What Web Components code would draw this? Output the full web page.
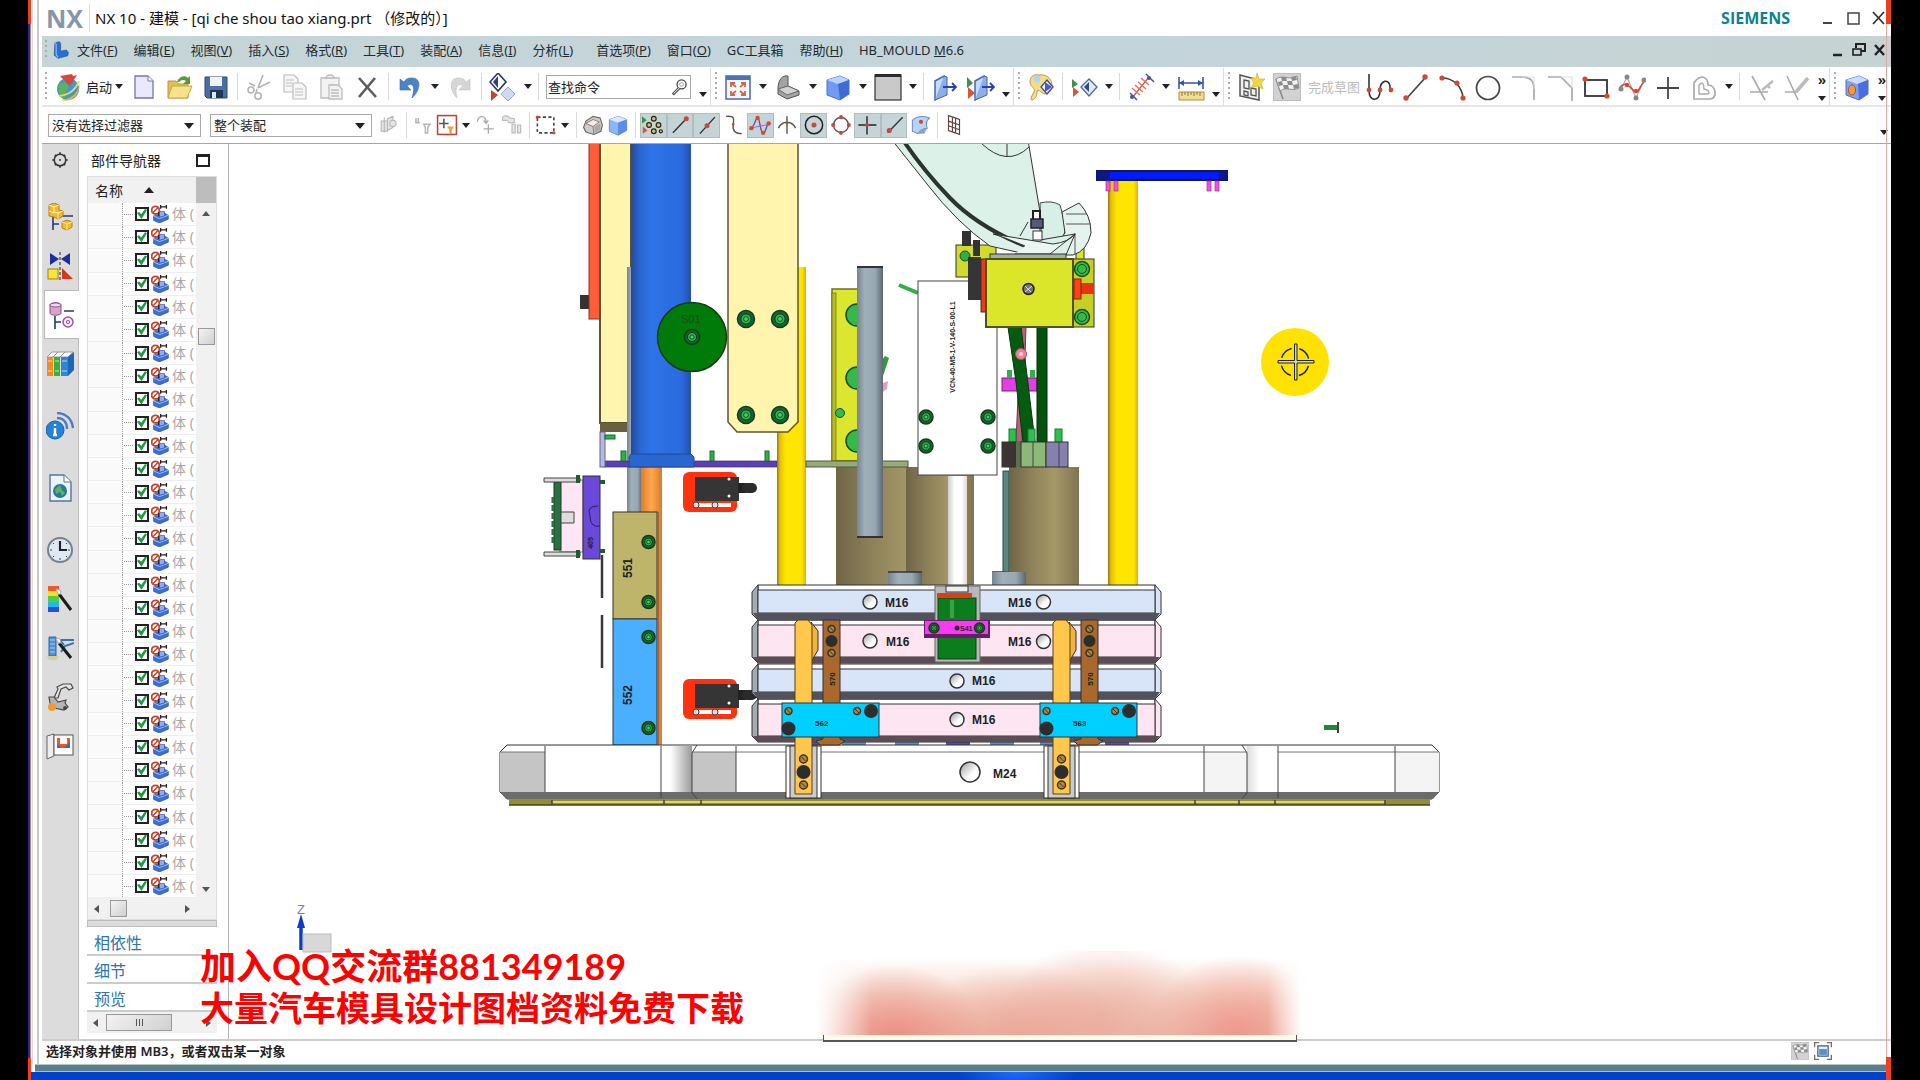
<!DOCTYPE html>
<html lang="zh-CN">
<head>
<meta charset="utf-8">
<title>NX 10 - 建模</title>
<style>
html,body{margin:0;height:100%;background:#000;overflow:hidden}
body{font-family:"Noto Sans","Noto Sans CJK SC",sans-serif;font-size:13px;color:#222}
</style>
</head>
<body>
<nx-app></nx-app>
<script>
const ICONS={
start:'<circle cx="14" cy="16" r="11" fill="#3c9ad0"/><path d="M5 12c4-4 8-2 9 1s-3 4-2 7-1 6-3 5-6-7-4-13z" fill="#5cb552"/><path d="M26 9c-1 10-8 17-19 18 8 3 19-3 19-18z" fill="#f2b31e"/><path d="M25 8c-3 8-10 14-20 15" stroke="#f6d45a" stroke-width="2" fill="none"/><path d="M6 3l12-2 1 2 4-1-7 11z" fill="#d8463c"/>',
new:'<path d="M5 3h13l5 5v17H5z" fill="#e9e9fb" stroke="#7476b0" stroke-width="1.3"/><path d="M18 3v5h5" fill="#fff" stroke="#7476b0"/>',
open:'<path d="M2 8h8l2 3h10v14H2z" fill="#e2c154" stroke="#b9963a"/><path d="M6 13h20l-5 12H2z" fill="#f7e28a" stroke="#c4a548"/><path d="M11 9c2-6 8-7 11-4l2-2v8h-7l3-3c-3-2-5-1-7 1z" fill="#5b9a3b"/>',
save:'<path d="M3 4h22v21H5l-2-2z" fill="#4b6f9f" stroke="#2e4b73"/><path d="M8 4h12v9H8z" fill="#eef2f8"/><path d="M8 17h13v8H8z" fill="#20355a"/><path d="M10 19h4v6h-4z" fill="#dfe7f2"/>',
cut:'<g fill="none" stroke="#b4b4b4" stroke-width="1.6"><path d="M13 15L18 2M13 15l12-6M10 13l-6-3M12 16l-1 4"/><circle cx="6" cy="17" r="3"/><circle cx="13" cy="23" r="3.2"/></g>',
copy:'<g fill="#f6f6f6" stroke="#bdbdbd" stroke-width="1.2"><path d="M3 2h10l4 4v13H3z"/><path d="M12 10h9l4 4v12H12z"/><path d="M5 7h8M5 10h6M5 13h6M14 16h8M14 19h8M14 22h8"/></g>',
paste:'<g fill="#f3f3f3" stroke="#bdbdbd" stroke-width="1.3"><path d="M4 5h18v20H4z"/><path d="M9 5c0-4 8-4 8 0z"/><path d="M12 12h9l4 4v10H12z"/><path d="M14 17h8M14 20h8M14 23h8"/></g>',
del:'<path d="M6 5l17 19M22 5L6 24" stroke="#5c5c5c" stroke-width="2.6"/>',
undo:'<path d="M4 6v11h11l-4-4c5-4 9 0 5 12 9-8 10-21-1-20-4 0-6 2-7 4z" fill="#4b83c4" stroke="#3b70b0" stroke-width=".6"/>',
redo:'<path d="M24 6v11H13l4-4c-4-4-9 0-6 12-8-8-8-21 2-20 4 0 6 2 7 4z" fill="#d6d6d6" stroke="#c0c0c0" stroke-width=".6"/>',
feat:'<path d="M9 0l8 9-8 9-8-9z" fill="#fff" stroke="#28336e" stroke-width="1.6"/><path d="M9 3v12L4 9z" fill="#28407e"/><path d="M2 17v11l7-6z" fill="#c2452e"/><path d="M19 14l7 7-7 7-7-7z" fill="#cfd9f0" stroke="#9aacd4"/>',
fit:'<rect x="2" y="3" width="24" height="23" fill="#f3f8ff" stroke="#4f72b2" stroke-width="1.6"/><path d="M2 3h24v4H2z" fill="#4f72b2"/><g stroke="#d9653e" stroke-width="1.8" fill="none"><path d="M12 14L7 10m0 4v-4h4M16 14l5-4m-4 0h4v4M12 18l-5 4m0-4v4h4M16 18l5 4m-4 0h4v-4"/></g>',
seat:'<path d="M4 16C4 6 9 2 14 3v10l11 5v4l-12 4-9-5z" fill="#a3a3a3" stroke="#555"/><path d="M4 16l10-3 11 5-12 4z" fill="#d1d1d1" stroke="#666"/>',
cube:'<path d="M3 7l13-4 9 4v14l-9 6-13-5z" fill="#6f9cf0" stroke="#4c6fc8"/><path d="M3 7l13-4 9 4-11 4z" fill="#b9d2ff"/><path d="M14 11l11-4v14l-9 6z" fill="#3f6cd0"/>',
box:'<rect x="1" y="2" width="26" height="25" fill="#c9c9c9" stroke="#333" stroke-width="1.2"/><path d="M1 1h26v3H1z" fill="#2c2830"/>',
wall:'<path d="M4 8l9-5v18l-9 6z" fill="#c6dafd" stroke="#4866a8" stroke-width="1.5"/><path d="M13 3l3 1v18l-12 5" fill="#8daee8" stroke="#4866a8"/><path d="M12 14h13m-4-4l4 4-4 4" stroke="#2b3fb0" stroke-width="1.8" fill="none"/>',
wall2:'<path d="M0 4v11l6-5z" fill="#3c9347"/><path d="M1 14v12l7-6z" fill="#d9553a"/><path d="M8 8l9-5v18l-9 6z" fill="#c6dafd" stroke="#4866a8" stroke-width="1.5"/><path d="M17 3l3 1v18l-12 5" fill="#8daee8" stroke="#4866a8"/><path d="M15 14h12m-4-4l4 4-4 4" stroke="#2b3fb0" stroke-width="1.8" fill="none"/>',
palette:'<path d="M3 9c0-7 6-8 9-7 7-1 12 3 13 9 1 5-3 10-7 10-5-1-5-5-8-3 0 4-1 8-5 9-2 0-1-3 2-8 2-4-4-5-4-10z" fill="#f6dc86" stroke="#b89c4b"/><circle cx="10" cy="6" r="3.4" fill="#a9d6f4"/><path d="M14 14l6-7 6 7-6 7z" fill="#eef" stroke="#3a4da0" stroke-width="1.3"/><path d="M18 9v10l7-5z" fill="#4a5fb4"/>',
play:'<path d="M2 6v9l6-4z" fill="#3c9347"/><path d="M3 14v10l6-5z" fill="#d9553a"/><path d="M19 6l8 8-8 9-8-9z" fill="#e2ebfb" stroke="#566aa8" stroke-width="1.4"/><path d="M19 9v10l-5-5z" fill="#2d4a94"/>',
dim:'<path d="M5 25L22 4" stroke="#c9553e" stroke-width="1.2"/><path d="M5 15l8 7M8 12l8 7M11 9l8 7M14 5l8 7" stroke="#d9765f" stroke-width="1.4"/><path d="M3 20l7 7M19 1l8 8" stroke="#4453a8" stroke-width="1.5"/><circle cx="5" cy="24" r="2" fill="#4453a8"/><circle cx="22" cy="5" r="2" fill="#4453a8"/>',
ruler:'<path d="M2 10h24M2 4v12M26 4v12" stroke="#3355a8" stroke-width="1.6"/><path d="M2 10l5-3v6zM26 10l-5-3v6z" fill="#3355a8"/><path d="M2 19h25v8H2z" fill="#f3dd94" stroke="#a38f47"/><path d="M5 19v4M8 19v3M11 19v4M14 19v3M17 19v4M20 19v3M23 19v4" stroke="#8a783a"/>',
sketch:'<path d="M3 2l19 5v20L3 23z" fill="#f1f1f1" stroke="#555" stroke-width="1.5"/><path d="M7 7l5 1v8l-5-1zM14 15l5 1v7l-5-1zM7 18l4 1v4l-4-1z" fill="none" stroke="#555" stroke-width="1.3"/><path d="M20 0l2 6 6 0-4 4 2 6-6-3-6 2 3-5-3-5h5z" fill="#f1d843" stroke="#c9a821" stroke-width=".6"/>',
flag:'<rect x="0.500" y="0.500" width="27" height="27" fill="#d2d2d2" stroke="#bdbdbd"/><path d="M3 6l7 20" stroke="#8a8a8a" stroke-width="1.600"/><path d="M3 6c7-5 13 2 21-3l2 12c-7 4-13-2-19 3z" fill="#f2f2f2" stroke="#8f8f8f"/><path d="M8 4l5 0 1 4-5 0zM18 4l5-1 1 4-5 1zM5 9l4-1 1 4-4 1zM14 8l5 0 1 4-5 0zM10 12l5 0 1 4-5 0zM20 12l5-1 1 4-5 1z" fill="#8c8c8c"/>',
profile:'<path d="M3 1v17c0 11 11 11 11 0 0-12 9-12 10-5v6" fill="none" stroke="#333" stroke-width="1.6"/><g fill="#d04a38"><circle cx="3" cy="17" r="2.4"/><circle cx="14" cy="17" r="2.4"/><circle cx="25" cy="17" r="2.4"/></g>',
line:'<path d="M5 25L23 5" stroke="#444" stroke-width="1.7"/><circle cx="4" cy="25" r="2.7" fill="#d04a38"/><circle cx="23" cy="4" r="2.7" fill="#d04a38"/>',
arc:'<path d="M4 5c11 0 20 8 21 20" fill="none" stroke="#444" stroke-width="1.7"/><g fill="#d04a38"><circle cx="4" cy="5" r="2.6"/><circle cx="19" cy="10" r="2.6"/><circle cx="25" cy="25" r="2.6"/></g>',
circle:'<circle cx="14" cy="15" r="11.5" fill="none" stroke="#444" stroke-width="1.7"/>',
fillet:'<path d="M2 4h10c9 0 12 4 12 13v10" fill="none" stroke="#aaa" stroke-width="1.7"/><path d="M12 4h12v12" fill="none" stroke="#ddd"/>',
chamfer:'<path d="M2 4h13l11 11v13" fill="none" stroke="#aaa" stroke-width="1.7"/><path d="M15 4h11v11" fill="none" stroke="#ddd"/>',
rect:'<rect x="3" y="7" width="22" height="16" fill="none" stroke="#333" stroke-width="1.8"/><circle cx="3" cy="6" r="2.6" fill="#d04a38"/><circle cx="25" cy="23" r="2.6" fill="#d04a38"/>',
spline:'<path d="M3 16l6-12 9 21 8-18" fill="none" stroke="#aaa" stroke-width="1.200"/><path d="M2 14c5-5 8-2 10 0s6 7 8 4 3-6 6-9" fill="none" stroke="#d04a38" stroke-width="1.6"/><g fill="#888"><circle cx="3" cy="16" r="2.5"/><circle cx="9" cy="4" r="2.5"/><circle cx="18" cy="25" r="2.5"/><circle cx="26" cy="7" r="2.5"/></g><circle cx="9" cy="12" r="2.200" fill="#d04a38"/><circle cx="18" cy="18" r="2.200" fill="#d04a38"/>',
plus:'<path d="M14 4v22M3 15h22" stroke="#444" stroke-width="1.8"/>',
offset:'<path d="M4 26V10c6-9 14-7 14 2 8 0 10 14 2 14z" fill="none" stroke="#aaa" stroke-width="1.7"/><path d="M9 21v-9c4-4 5-1 5 4 6 1 6 5 3 5z" fill="none" stroke="#aaa" stroke-width="1.4"/>',
trim:'<path d="M5 3l13 24M3 19l18 0" stroke="#aaa" stroke-width="1.6"/><path d="M15 17L26 8M20 12l3 3" stroke="#bbb" stroke-width="2.5"/>',
extend:'<path d="M4 3l11 24M2 19l12 0" stroke="#aaa" stroke-width="1.6"/><path d="M13 19L25 5" stroke="#bbb" stroke-width="3.5"/>',
hole:'<path d="M3 7l13-4 9 4v14l-9 6-13-5z" fill="#7fa0f0" stroke="#4c6fc8"/><path d="M3 7l13-4 9 4-11 4z" fill="#cadcff"/><path d="M15 11l10-4v14l-9 6z" fill="#4a6ee0"/><ellipse cx="9" cy="17" rx="3.6" ry="5" fill="#f39a3a" stroke="#b9501c"/>',
gray1:'<g fill="#e3e3e3" stroke="#b5b5b5" stroke-width="1.3"><path d="M4 9h8v13H4zM12 6l7-3v14l-7 4z"/><circle cx="19" cy="12" r="4"/><path d="M8 4v20"/></g>',
gray2:'<path d="M5 5v6h5M8 5v5M15 13h8l-3 4v7h-3v-7z" fill="none" stroke="#b8b8b8" stroke-width="2"/>',
redbox:'<rect x="2" y="2" width="24" height="24" fill="#fff" stroke="#b6483c" stroke-width="2"/><path d="M10 6v12M4 12h12" stroke="#555" stroke-width="2"/><path d="M14 16h9l-3 4v5h-3v-5z" fill="#efa233"/>',
gray3:'<g fill="none" stroke="#aaa" stroke-width="1.7"><path d="M3 10c0-9 12-9 11 1M11 8l3 4 3-4M17 13v12M11 19h13"/></g>',
gray4:'<g fill="#e8e8e8" stroke="#bbb" stroke-width="1.5"><path d="M2 4c4-3 8-1 9 1l6 1v5h-7l-2-3-6 0z"/><path d="M14 13h4v11h-4zM21 14h4v10h-4z"/></g>',
marq:'<rect x="3" y="4" width="21" height="20" fill="none" stroke="#444" stroke-width="2" stroke-dasharray="4 3"/><circle cx="3" cy="4" r="2" fill="#c54a3c"/><circle cx="24" cy="24" r="2" fill="#c54a3c"/>',
stone:'<path d="M2 17l3-8 9-6 9 2 3 9-2 8-9 4-10-3z" fill="#ccc" stroke="#666" stroke-width="1.4"/><path d="M5 12l9-5 8 3-8 6zM14 16l1 9" fill="#eee" stroke="#9b5d55"/><path d="M16 16l7-4 1 8-8 4z" fill="#aaa"/>',
cube2:'<path d="M3 7l12-4 10 4v14l-11 6-11-5z" fill="#8ab6f4" stroke="#5580c8"/><path d="M3 7l12-4 10 4-11 4z" fill="#d9e8ff"/><path d="M14 11l11-4v14l-11 6z" fill="#5b8de4"/>',
snap:'<path d="M0 3v9l6-4z" fill="#3c9347"/><path d="M1 16v9l6-4z" fill="#d9553a"/><g fill="#e3c24a" stroke="#222" stroke-width="1.5"><circle cx="15" cy="6" r="3"/><circle cx="9" cy="14" r="3"/><circle cx="21" cy="14" r="3"/><circle cx="15" cy="22" r="3"/><circle cx="24" cy="22" r="2"/></g>',
end:'<path d="M5 24L22 6" stroke="#333" stroke-width="1.8"/><circle cx="22" cy="6" r="3.2" fill="#c7483c"/>',
mid:'<path d="M5 25L24 4" stroke="#333" stroke-width="1.8"/><circle cx="14" cy="15" r="3.2" fill="#c7483c"/>',
curve:'<path d="M4 3c11-1 10 3 9 10s1 12 11 12" fill="none" stroke="#555" stroke-width="1.8"/><circle cx="13" cy="13" r="1.6" fill="#c7483c"/>',
spl2:'<path d="M3 17c4 0 5-12 8-12s3 19 7 19 4-11 7-12" fill="none" stroke="#7a3f96" stroke-width="1.7"/><path d="M2 18l24-5" stroke="#9a6ab0" stroke-width="1.200"/><g fill="#d04a38"><circle cx="3" cy="18" r="2.8"/><circle cx="11" cy="5" r="2.8"/><circle cx="18" cy="24" r="2.8"/><circle cx="25" cy="12" r="2.8"/></g>',
cross:'<path d="M14 3v22M3 18c5-10 17-10 22 0" fill="none" stroke="#555" stroke-width="1.8"/><circle cx="14" cy="12" r="1.6" fill="#c7483c"/>',
cen:'<circle cx="14" cy="14" r="11" fill="none" stroke="#222" stroke-width="1.9"/><circle cx="14" cy="14" r="3.2" fill="#c7483c"/>',
quad:'<circle cx="14" cy="14" r="9.5" fill="none" stroke="#555" stroke-width="1.8"/><g fill="#c7483c"><circle cx="14" cy="4" r="2.6"/><circle cx="14" cy="24" r="2.6"/><circle cx="4" cy="14" r="2.6"/><circle cx="24" cy="14" r="2.6"/></g>',
pt:'<path d="M14 3v23M3 14h23" stroke="#222" stroke-width="1.8"/><circle cx="14" cy="14" r="2.6" fill="#c7483c"/>',
on:'<path d="M6 24L25 4" stroke="#333" stroke-width="1.8"/><circle cx="8" cy="21" r="3.2" fill="#c7483c"/>',
face:'<path d="M3 8c6-6 13-6 22-3-4 3-5 8-3 13-5 0-9 2-12 7L3 22z" fill="#b8d3f6" stroke="#6c8cc4" stroke-width="1.300"/><path d="M10 25c3-5 7-7 12-7l-4 7z" fill="#7ea4de"/><circle cx="14" cy="10" r="2.6" fill="#c7483c"/>',
mesh:'<path d="M7 2l14 5v19L7 21zM12 4v19M16 5v19M7 9l14 5M7 15l14 5" fill="none" stroke="#5c4444" stroke-width="1.5"/>',
gear:'<circle cx="14" cy="14" r="9" fill="none" stroke="#333" stroke-width="2.4"/><path d="M14 2v4M14 22v4M2 14h4M22 14h4M6 6l2 2M20 20l2 2M22 6l-2 2M8 20l-2 2" stroke="#333" stroke-width="2.4"/><circle cx="14" cy="14" r="1.5" fill="#333"/>',
asm:'<path d="M7 14v13M7 21h6M14 13h13" stroke="#223a78" stroke-width="1.6"/><path d="M3 2l5-2 5 2v5l4 1v5l-5 3-4-2-5-1z" fill="#f2b92e" stroke="#bd7f12"/><path d="M3 2l5 2 5-2M8 4v5M8 9l4 1 5-2M12 10v6M3 8l5 2" stroke="#fff3b0" fill="none"/><path d="M16 19l5-2 5 2v5l-5 3-5-2z" fill="#f2b92e" stroke="#bd7f12"/><path d="M16 19l5 2 5-2M21 21v6" stroke="#fff3b0" fill="none"/>',
cons:'<path d="M4 1v12l9-6zM24 1v12l-9-6z" fill="#1d2ea0"/><path d="M14 0v28" stroke="#222" stroke-dasharray="3 2"/><rect x="2" y="17" width="10" height="10" fill="#fbe53b" stroke="#a0820a"/><path d="M16 16v11h11z" fill="#d5371d"/>',
part:'<path d="M2 4c0-3 11-3 11 0v8c0 3-11 3-11 0z" fill="#d6a3cf" stroke="#8d4f86"/><ellipse cx="7.500" cy="4" rx="5.500" ry="2" fill="#f3d5ef" stroke="#8d4f86"/><path d="M16 10h10M7 15v13M7 21h6" stroke="#223a78" stroke-width="1.6"/><circle cx="20" cy="21" r="5" fill="#f5e5f5" stroke="#9a5a9a" stroke-width="1.5"/><circle cx="20" cy="21" r="1.6" fill="none" stroke="#9a5a9a"/>',
books:'<path d="M1 7l5-5h21l-5 5z" fill="#fff" stroke="#999"/><path d="M1 7h6v19H1z" fill="#f28b22"/><path d="M8 7h6v19H8z" fill="#3cae3b"/><path d="M15 7h7v19h-7z" fill="#2a86d8"/><path d="M22 7l6-5v18l-6 6z" fill="#1c66b4"/><path d="M2 11h4M9 11h4M16 11h5M2 21h4M9 21h4M16 21h5" stroke="#fff" stroke-opacity=".7"/><path d="M7 7l5-5M14 7l5-5" stroke="#888"/>',
info:'<circle cx="9" cy="18" r="9" fill="#2383d8" stroke="#1560a8"/><path d="M9 12v2M9 16v7M7 23h4" stroke="#fff" stroke-width="2.4"/><path d="M11 6c6 0 10 4 10 11M11 1c9 0 15 6 16 15" fill="none" stroke="#4d7cc4" stroke-width="2.4"/>',
doc:'<path d="M4 1h14l7 7v19H4z" fill="#eaf4fc" stroke="#55749b" stroke-width="1.4"/><path d="M18 1v7h7" fill="#fff" stroke="#55749b"/><circle cx="14" cy="17" r="7" fill="#2a77a5"/><path d="M9 15l5-4 2 5 3 3-3 3-2-4-4 2z" fill="#59b35b"/>',
clock:'<circle cx="14" cy="14" r="12" fill="#dfe9f5" stroke="#76828f" stroke-width="2"/><path d="M14 5v9h7" fill="none" stroke="#222" stroke-width="2.2"/><path d="M14 22v2M4 14h2M22 14h2M7 7l1 1M21 7l-1 1M7 21l1-1M21 21l-1-1" stroke="#445"/>',
rain:'<path d="M2 1h11v5H2z" fill="#f0582a"/><path d="M2 6h11v5H2z" fill="#f8dd2c"/><path d="M2 11h11v6H2z" fill="#4fcf3d"/><path d="M2 17h11v5H2z" fill="#28b8e8"/><path d="M2 22h11v5H2z" fill="#2a50d8"/><path d="M13 9l12 16" stroke="#1b1b1b" stroke-width="3"/><path d="M10 4l4 1 1 4-3 0z" fill="#fff" stroke="#aaa"/>',
tool:'<path d="M3 3h7v19H3z" fill="#4e91d8" stroke="#2d66a8"/><path d="M4 6h5M4 10h5M4 14h5M4 18h5" stroke="#a8d0f6"/><path d="M1 22h12l-2 4H3z" fill="#d9ce90"/><path d="M28 6H14l4 5M28 9l-9 3-4 6" fill="none" stroke="#3476b8" stroke-width="2"/><path d="M13 9l12 15" stroke="#1b1b1b" stroke-width="3"/><path d="M10 4l4 1 1 4-3 0z" fill="#fff" stroke="#aaa"/>',
fork:'<path d="M11 4l6-3 8 0 2 4-4 2-3-3-5 2-3 9-4 0 4-9z" fill="#e4e4e4" stroke="#4a4a4a" stroke-width="1.200"/><path d="M3 14l5 0 4 5 8-2-1 3 3 4-4 3-10-2-4-5z" fill="#b5b5b5" stroke="#4a4a4a" stroke-width="1.200"/><circle cx="6" cy="24" r="4" fill="#ef9d32"/><circle cx="19" cy="25" r="2" fill="#444"/>',
pic:'<path d="M1 4l7-2v22l-7 3z" fill="#eee" stroke="#666"/><rect x="8" y="3" width="19" height="20" fill="#fff" stroke="#555"/><rect x="11" y="6" width="13" height="10" fill="#e55a2b"/><path d="M14 6h7v6h-7z" fill="#fff"/><path d="M11 12l5 4h-5zM18 16l6-6v6z" fill="#2e6cd0"/>',
body:'<path d="M4 17l16-5 7 4v6l-14 6-9-4z" fill="#3b6ed8" stroke="#2a4fa8"/><path d="M4 17l9 4 14-5" fill="none" stroke="#b8d0ff" stroke-width="1.300"/><path d="M12 10h9v7l-8 2z" fill="#8ab0f0" stroke="#2a4fa8"/><circle cx="7" cy="8" r="6" fill="#fff" stroke="#c8432b" stroke-width="2.8"/><path d="M3 12l8-8" stroke="#c8432b" stroke-width="2.400"/><path d="M15 3h9M15 0v6M24 0v6M12 11v6" stroke="#222" stroke-width="2"/>',
nx:'<path d="M6 3l7-2 2 3v12l9-2 3 4-1 5-15 4-6-5z" fill="#2c6fd4" stroke="#1a4ca0"/><path d="M6 3l2 2v16l3 4" fill="none" stroke="#9cc4ff" stroke-width="1.6"/>',
lens:'<circle cx="18" cy="10" r="7" fill="none" stroke="#444" stroke-width="2"/><circle cx="18" cy="10" r="3" fill="none" stroke="#777"/><path d="M13 15l-9 9 2 2 9-9" fill="#fff" stroke="#444" stroke-width="1.6"/>',
win:'<path d="M1 8V1h7M20 1h7v7M27 20v7h-7M8 27H1v-7" fill="none" stroke="#7b6a6a" stroke-width="2"/><rect x="6" y="6" width="16" height="16" fill="#e6eef8" stroke="#45618a" stroke-width="2"/><path d="M8 11h12v9H8z" fill="#5b8dcb"/>'
};
const define=(name,tpl,init)=>{
 const t=document.createElement('template');t.innerHTML=tpl;
 customElements.define(name,class extends HTMLElement{
  constructor(){super();this.attachShadow({mode:'open'}).append(t.content.cloneNode(true))}
  connectedCallback(){if(!this.ready){this.ready=true;if(init)init(this,this.shadowRoot)}}
 });
};

define('nx-icon','<style>:host{display:block;width:28px;height:28px;flex:none}:host([small]){width:22px;height:22px}:host([tiny]){width:18px;height:18px}svg{display:block;width:100%;height:100%}</style><svg viewBox="0 0 28 28" aria-hidden="true"></svg>',
 (h,r)=>{r.querySelector('svg').innerHTML=ICONS[h.getAttribute('name')]||''});

define('nx-button',`<style>:host{display:block;width:36px;flex:none}:host([compact]){width:26px}:host([narrow]){width:24px}:host([grow]){width:auto;flex:1 1 0}
button{font:inherit;border:1px solid transparent;background:none;padding:0;margin:0;width:100%;height:32px;display:flex;align-items:center;justify-content:center}
:host([compact]) button,:host([narrow]) button,:host([grow]) button{height:25px}
:host([on]) button{background:#c5d4d6;border-color:#aebfc2}</style><button type="button"><slot></slot></button>`,
 (h,r)=>r.querySelector('button').setAttribute('aria-label',h.getAttribute('label')||'tool'));

define('nx-arrow',`<style>:host{display:block;width:14px;flex:none;align-self:center}:host([low]){align-self:flex-end;padding-bottom:6px;box-sizing:border-box}
button{border:0;background:none;padding:0;width:100%;height:10px;display:grid;place-items:center}i{border:4px solid transparent;border-top:5px solid #222;border-bottom:0}
span{display:none;font:bold 15px/15px "Liberation Sans";color:#222}:host([more]) span{display:block}:host([more]) button{height:29px;align-content:space-between}</style><button type="button" aria-label="更多"><span>»</span><i></i></button>`);
define('nx-sep','<style>:host{display:block;width:7px;flex:none;align-self:stretch;padding:5px 3px;box-sizing:border-box}:host([wide]){width:9px;padding:5px 4px}i{display:block;height:100%;border-left:1px solid #d9d9d9}</style><i></i>');
define('nx-grip','<style>:host{display:block;width:10px;flex:none;align-self:stretch;padding:4px 2px 4px 4px;box-sizing:border-box;border-left:1px solid #ddd}:host([first]){width:8px;border:0;padding-left:3px}i{display:block;height:100%;width:2px;background:repeating-linear-gradient(#aaa 0 2px,transparent 2px 5px)}</style><i></i>');

define('nx-titlebar',`<style>:host{display:flex;align-items:center;height:36px;padding-left:4px;color:#111}
b.l{font:bold 25px/36px "Open Sans",sans-serif;color:#8497a6;width:43px}
.t{border-left:1px solid #ddd;padding-left:5px;font-size:15px;line-height:28px;flex:1;white-space:pre}
b.s{font:bold 16px/36px "Open Sans",sans-serif;color:#0b8291;margin-right:32px}
button{border:0;background:none;padding:0;width:13px;height:14px;margin-right:12px}button:last-child{margin-right:6px}svg{display:block}</style>
<b class="l">NX</b><span class="t">NX 10 - 建模 - [qi che shou tao xiang.prt （修改的）]</span><b class="s">SIEMENS</b>
<button aria-label="最小化"><svg width="13" height="14"><path d="M1 12h9" stroke="#444" stroke-width="2"/></svg></button>
<button aria-label="最大化"><svg width="13" height="14"><rect x="1" y="2" width="11" height="11" fill="none" stroke="#444" stroke-width="1.500"/></svg></button>
<button aria-label="关闭"><svg width="13" height="14"><path d="M1 1l11 12M12 1L1 13" stroke="#333" stroke-width="1.800"/></svg></button>`);

define('nx-menubar',`<style>:host{display:flex;align-items:center;height:31px;padding-bottom:3px;box-sizing:border-box;background:linear-gradient(90deg,#c6d5d5,#c3d4dc 50%,#c6d3d3);color:#1e2c30}
nx-icon{margin:0 8px 0 1px}
nav{display:flex;flex:1;gap:16px}button{font:inherit;font-size:13px;line-height:20px;color:inherit;border:0;background:none;padding:0;white-space:nowrap}
.w{display:flex;gap:7px;padding-right:5px}.w svg{display:block}.pad{padding-left:7px}</style>
<nx-grip first></nx-grip><nx-icon name="nx" tiny></nx-icon>
<nav><button>文件(<u>F</u>)</button><button>编辑(<u>E</u>)</button><button>视图(<u>V</u>)</button><button>插入(<u>S</u>)</button><button>格式(<u>R</u>)</button><button>工具(<u>T</u>)</button><button>装配(<u>A</u>)</button><button>信息(<u>I</u>)</button><button>分析(<u>L</u>)</button><button class="pad">首选项(<u>P</u>)</button><button>窗口(<u>O</u>)</button><button>GC工具箱</button><button>帮助(<u>H</u>)</button><button>HB_MOULD <u>M</u>6.6</button></nav>
<div class="w"><button aria-label="最小化"><svg width="13" height="14"><path d="M1 12h9" stroke="#222" stroke-width="2.500"/></svg></button><button aria-label="还原"><svg width="14" height="14"><path d="M4 5V1h9v7H9" fill="none" stroke="#222" stroke-width="2"/><rect x="1" y="6" width="8" height="6" fill="none" stroke="#222" stroke-width="1.600"/></svg></button><button aria-label="关闭"><svg width="13" height="14"><path d="M2 2l9 10M11 2L2 12" stroke="#222" stroke-width="2.400"/></svg></button></div>`);

const bt=(n,a='')=>`<nx-button ${a} label="${n}"><nx-icon name="${n}" ${/compact|narrow|grow/.test(a)?'small':''}></nx-icon></nx-button>`;
const A='<nx-arrow></nx-arrow>',L='<nx-arrow low></nx-arrow>',S='<nx-sep></nx-sep>',W='<nx-sep wide></nx-sep>',G='<nx-grip></nx-grip>';
const seq=s=>s.split(' ').map(k=>({A,L,S,G})[k]||bt(k)).join('');
define('nx-main-toolbar',`<style>:host{display:flex;align-items:center;height:40px;padding-top:1px;border-bottom:2px solid #e6e6e6;box-sizing:border-box}
.lb{font-size:13px;width:26px;white-space:nowrap}.off{color:#bcbcbc;font-size:13px;width:54px;padding-left:3px}
label{display:flex;align-items:center;box-sizing:border-box;width:145px;height:24px;border:1px solid #aaa;margin:0 5px 0 4px;padding:0 2px 0 1px}
input{font:inherit;font-size:13px;border:0;outline:0;padding:0;min-width:0;flex:1;color:#222;background:none}input::placeholder{color:#222;opacity:1}</style>
<nx-grip first></nx-grip>${bt('start')}<span class="lb">启动</span>${A}${seq('new open save S cut copy paste del S undo A redo S feat A S')}
<label><input type="text" placeholder="查找命令" aria-label="查找命令"><nx-icon name="lens" tiny></nx-icon></label>${L}
${seq('G fit A seat A cube A box A S wall wall2 L G palette S play A S dim A ruler L G sketch flag')}<span class="lb off">完成草图</span>
${seq('profile line arc circle fillet chamfer rect spline plus offset A S trim extend')}<nx-arrow more></nx-arrow>${G}${bt('hole')}<nx-arrow more></nx-arrow>`);

define('nx-combo',`<style>:host{display:block;position:relative;flex:none;box-sizing:border-box;height:23px;border:1px solid #aaa;background:#fff}
select{appearance:none;border:0;background:none;font:inherit;font-size:13px;width:100%;height:100%;padding:0 20px 0 3px;color:#222;outline:0}
i{position:absolute;right:6px;top:8px;border:5px solid transparent;border-top:6px solid #222;border-bottom:0;pointer-events:none}</style><select></select><i></i>`,
 (h,r)=>{const s=r.querySelector('select');s.setAttribute('aria-label',h.getAttribute('value'));s.add(new Option(h.getAttribute('value')))});
define('nx-select-toolbar',`<style>:host{display:flex;align-items:center;height:37px;border-bottom:1px solid #a6a6a6;box-sizing:border-box;padding-left:6px}
.a{width:153px;margin-right:9px}.b{width:162px;margin-right:4px}.g{display:flex;width:294px}.f{flex:1}</style>
<nx-combo class="a" value="没有选择过滤器"></nx-combo><nx-combo class="b" value="整个装配"></nx-combo>
${bt('gray1','compact')}${W}${bt('gray2','narrow')}${bt('redbox','narrow')}${A}${bt('gray3','compact')}${bt('gray4','compact')}${W}${bt('marq','narrow')}${A}${W}${bt('stone','narrow')}${bt('cube2','compact')}${W}
<div class="g">${['snap*','end*','mid*','curve','spl2*','cross','cen*','quad','pt*','on*','face'].map(x=>bt(x.replace('*',''),'grow '+(x.includes('*')?'on':''))).join('')}</div><nx-sep></nx-sep>${bt('mesh','compact')}<span class="f"></span>${L}`);

define('nx-resource-bar',`<style>:host{display:flex;flex-direction:column;width:37px;flex:none;background:#dcdcdc;border-right:1px solid #bbb;box-sizing:border-box}
button{border:0;border-right:0;background:none;padding:0;height:49px;flex:none;display:grid;place-items:center}
.g{height:31px;margin-bottom:17px}.m{margin-top:13px}.on{background:#fff;margin:0 -1px 0 2px;border:1px solid #bbb;border-right:0}</style>
${['gear','asm','cons','part','books','info','doc','clock','rain','tool','fork','pic'].map(n=>`<button aria-label="${n}" class="${n=='gear'?'g':n=='part'?'on':/info|doc|clock/.test(n)?'m':''}"><nx-icon name="${n}" ${n=='gear'?'tiny':''}></nx-icon></button>`).join('')}`);

define('tree-row',`<style>:host{display:flex;align-items:center;flex:1 1 0;min-height:0;border-bottom:1px solid #eee;box-sizing:border-box;overflow:hidden;color:#aaa}
.in{width:34px;flex:none;align-self:stretch;border-right:1px dotted #999;background:#fafafa}.d{width:9px;flex:none;border-top:1px dotted #999;margin:0 2px 0 1px}
label{display:flex;align-items:center;white-space:pre;font-size:14px;line-height:20px}
input{appearance:none;width:14px;height:14px;border:2px solid #222;background:#fff;margin:0 2px 0 0;display:grid;flex:none}
input::before{content:"";background:#1b9a42;clip-path:polygon(0 40%,22% 30%,42% 52%,80% 0,100% 8%,45% 100%)}
nx-icon{margin-right:3px}</style><span class="in"></span><span class="d"></span><label><input type="checkbox" checked><nx-icon name="body" tiny></nx-icon><slot></slot></label>`);

define('part-navigator',`<style>:host{display:flex;flex-direction:column;width:150px;flex:none;border-right:1px solid #b5b5b5;box-sizing:border-box;padding:0 11px 0 8px}
header{display:flex;align-items:center;justify-content:space-between;height:32px;padding:0 7px 0 4px;font-size:14px}header button{width:14px;height:13px;padding:0;border:2px solid #222;border-top-width:3px;background:#fff}
.box{border:1px solid #ddd;display:flex;flex-direction:column;flex:1;min-height:0}
.h{display:flex;height:26px;flex:none;background:#f1f1f1;align-items:center;padding-left:7px;font-size:14px}.h i{border:5px solid transparent;border-bottom:6px solid #222;border-top:0;margin-left:21px;flex:none}.h b{margin-left:auto;width:20px;align-self:stretch;background:#bdbdbd}
.b{display:flex;flex:1;min-height:0}.rows{flex:1;min-width:0;display:flex;flex-direction:column}
.v{width:20px;flex:none;background:#f1f1f1;display:flex;flex-direction:column;align-items:center;padding:8px 0 6px;box-sizing:border-box}
.v i,.hs i{border:4px solid transparent}.v .u{border-bottom:5px solid #555;border-top:0}.v .dn{border-top:5px solid #555;border-bottom:0;margin-top:auto}
.th{background:linear-gradient(135deg,#f3f3f3,#d0d0d0);border:1px solid #999;box-sizing:border-box}
.v .th{width:17px;height:17px;margin-top:112px}
.hs{display:flex;align-items:center;height:21px;flex:none;background:#f1f1f1;padding:0 6px}.hs .lf{border-right:5px solid #555;border-left:0}.hs .rt{border-left:5px solid #555;border-right:0;margin-left:auto}
.box .rt{margin-right:20px}
.hs .th{width:17px;height:17px;margin-left:11px}.sp{height:5px;flex:none;background:#dcdcdc;border:1px solid #bbb;margin-bottom:1px}
.s{border:0;background:none;text-align:left;font:inherit;font-size:16px;line-height:20px;color:#2e75b0;height:28px;padding:3px 0 0 7px;border-bottom:2px solid #ccc;flex:none}
.bt{margin-bottom:6px}.bt .th{width:66px;height:17px;margin-left:8px;display:flex;justify-content:center;gap:2px;padding-top:4px}.bt em{width:1px;height:7px;background:#555}</style>
<header><span>部件导航器</span><button aria-label="浮动"></button></header>
<div class="box"><div class="h"><span>名称</span><i></i><b></b></div><div class="b"><div class="rows"></div><div class="v"><i class="u"></i><div class="th"></div><i class="dn"></i></div></div><div class="hs"><i class="lf"></i><div class="th"></div><i class="rt"></i></div></div>
<div class="sp"></div><button class="s">相依性</button><button class="s">细节</button><button class="s">预览</button>
<div class="hs bt"><i class="lf"></i><div class="th"><em></em><em></em><em></em></div><i class="rt"></i></div>`,
 (h,r)=>{r.querySelector('.rows').innerHTML='<tree-row>体 (</tree-row>'.repeat(30)});

const R=(x,y,x2,y2,f,e='')=>`<rect x="${x}" y="${y}" width="${x2-x}" height="${y2-y}" fill="${f}" ${e}/>`;
const K='stroke="#333" stroke-width="1"';
const bolt=(x,y,r)=>`<circle cx="${x}" cy="${y}" r="${r}" fill="#12682a" stroke="#173a1e" stroke-width="1.500"/><circle cx="${x}" cy="${y}" r="${r*.6}" fill="#31b352" stroke="#0d3b18"/><circle cx="${x}" cy="${y}" r="${r*.28}" fill="#45d268" stroke="#0d3b18" stroke-width=".8"/>`;
const hole=(x,y,r)=>`<circle cx="${x}" cy="${y}" r="${r}" fill="url(#ho)" stroke="#333" stroke-width="1.500"/>`;
const T=(x,y,s,z=12,e='')=>`<text x="${x}" y="${y}" font-size="${z}" ${e}>${s}</text>`;
const V=(x,y,s,z)=>`<text transform="translate(${x} ${y}) rotate(-90)" font-size="${z}" text-anchor="middle">${s}</text>`;
const layer=(y,a,b,c,f,d)=>R(758,y,1155,c,'#fff',K)+`<path d="M758 ${y}l-6 7v${c-y-13}l6 6z" fill="#a3abb5" ${K}/><path d="M1155 ${y}l6 7v${c-y-13}l-6 6z" fill="${f}" ${K}/>`+R(758,a,1155,b,f,K)+`<path d="M753 ${b}h407l-5 ${c-b}H758z" fill="${d}"/>`;
const sensor=y=>`<rect x="683" y="${y}" width="54" height="40" rx="6" fill="#ff3210"/>`+R(695,y+5,739,y+29,'#353535')+R(738,y+11,746,y+21,'#222')+`<rect x="742" y="${y+11}" width="15" height="10" rx="5" fill="#2b2b2b"/>`+R(694,y+31,731,y+35,'#fff')+`<g fill="#ddd" stroke="#444"><circle cx="696" cy="${y+33}" r="3"/><circle cx="715" cy="${y+33}" r="3"/></g><g fill="#fff"><circle cx="729" cy="${y+7}" r="1.500"/><circle cx="729" cy="${y+24}" r="1.500"/></g>`;
const dot=(x,y,r)=>`<circle cx="${x}" cy="${y}" r="${r}" fill="#2d2d2d"/>`;
const scr=(x,y,r=3.5)=>`<circle cx="${x}" cy="${y}" r="${r}" fill="#b8862e" stroke="#333" stroke-width="1.500"/><path d="M${x-2} ${y-2}l4 4" stroke="#333"/>`;
const clamp=(dx,n)=>`<g transform="translate(${dx} 0)">`+R(786,746,821,798,'#fff',K)+R(790,746,817,798,'#ccc',K)+`<path d="M823 620h17v119l5 2-6 4h-19l-4-4 7-2z" fill="#a9692d" ${K}/><path d="M811 622l7 9v19l-7 12z" fill="#f2b53c" ${K}/><path d="M795 623l3-3h10l4 5v169h-17z" fill="#ffc84c" stroke="#5a4010"/>`+scr(831.5,629)+dot(831.5,641,6)+scr(831.5,653)+V(835,679,'570',8)+R(782,703,879,737,'#00d0ff',K)+scr(788.5,711)+scr(857,711)+dot(871,711,7)+dot(788.5,728.5,7)+T(815,726,n,8)+scr(803.5,759,4)+dot(803.5,772,7)+scr(803.5,785,4)+'</g>';
const grad=(id,...c)=>`<linearGradient id="${id}">${c.map(([o,k])=>`<stop offset="${o}" stop-color="${k}"/>`).join('')}</linearGradient>`;
const scene=`<defs>
${grad('bl',[0,'#23499b'],[.15,'#2a66d2'],[.35,'#2e74e8'],[.85,'#2a6add'],[1,'#2350a8'])}${grad('ye',[0,'#8f7a14'],[.1,'#e5bf0a'],[.3,'#ffe600'],[.85,'#ffe600'],[1,'#dcb300'])}
${grad('gy',[0,'#77848d'],[.3,'#a0b0ba'],[.7,'#98a8b2'],[1,'#5c6870'])}${grad('br',[0,'#6f6547'],[.3,'#8c8059'],[.65,'#a59868'],[1,'#7f7450'])}${grad('or',[0,'#e07c28'],[.5,'#ffa850'],[1,'#d87a2c'])}
${grad('w',[0,'#ccc'],[.35,'#fff'],[.7,'#fff'],[1,'#e5d9c9'])}${grad('f1',[0,'#fff'],[.3,'#fff'],[1,'#999'])}${grad('f2',[0,'#ddd'],[.4,'#fff'])}
<linearGradient id="ho" x1="0" y1="0" x2="1" y2="1"><stop offset="0" stop-color="#999"/><stop offset=".6" stop-color="#fff"/></linearGradient></defs>`
+R(580,295,590,309,'#333')+R(589,140,600,319,'#ff5c38','stroke="#8f2f1c"')+R(600,140,631,423,'#fff5ae','stroke="#5c5530" stroke-width="2"')+R(600,423,629,432,'#6a6040')
+R(627,267,642,513,'url(#gy)')+R(641,467,662,745,'url(#or)')+R(604,461,777,467,'#5d3fb4','stroke="#3a2a70" stroke-width=".700"')+R(600,432,605,467,'#b6b9e8','stroke="#667"')
+[[605,435,615,439],[621,451,626,461],[710,451,714,461],[765,451,769,461]].map(a=>R(...a,'#2fae4c','stroke="#1b6b2c"')).join('')
+R(777,267,806,585,'url(#ye)')+R(631,140,691,455,'url(#bl)')+`<path d="M631 454h60l3 3v10h-65v-10z" fill="#2867d0" stroke="#1c4a98"/>`
+`<path d="M728 140v282l9 10h51l10-10V140z" fill="#fff5ae" stroke="#5c5530" stroke-width="1.500"/>`+[[746,319],[780,319],[746,415],[780,415]].map(a=>bolt(...a,8.5)).join('')
+`<circle cx="692" cy="337" r="34.500" fill="#007a08" stroke="#123c14" stroke-width="1.500"/>`+bolt(692,337,7.5)+T(681,323,'S01',11,'style="fill:#1f4a1f;font-weight:400"')
+R(832,289,860,461,'#dde62e','stroke="#6d701a" stroke-width="1.500"')+R(832,293,836,461,'#b5bd22','stroke="#6d701a" stroke-width=".700"')+[315,378,441].map(y=>`<circle cx="857" cy="${y}" r="11" fill="#35b94a" stroke="#174e20" stroke-width="1.500"/>`).join('')+`<circle cx="840" cy="413" r="4.500" fill="#35b94a" stroke="#174e20"/>`
+R(836,467,950,585,'url(#br)')+R(906,467,974,585,'url(#br)')+R(948,476,967,585,'url(#w)')+R(806,461,908,467,'#98a97c','stroke="#4f5c3c"')
+`<path d="M882 360l3-4 4 2-6 18z" fill="#2d9a44"/><path d="M881 384l7-3-1 8-6 4z" fill="#e59ac0"/>`
+R(857,267,883,537,'url(#gy)')+'<path d="M857 267h26M857 537h26" stroke="#333" stroke-width="2"/>'
+R(888,572,922,585,'url(#gy)')+'<path d="M888 572h34M992 572h34" stroke="#334" stroke-width="1.500"/>'+'<path d="M899 285l19 8" stroke="#2fae4c" stroke-width="4"/>'
+R(918,281,997,475,'#fff','stroke="#444"')+V(955,347,'VCN-40-M5-1-V-140-S-00-L1',7)+[[926,417],[988,417],[926,446],[988,446]].map(a=>bolt(...a,7)).join('')
+R(1003,471,1009,572,'#5d8580','stroke="#2c4a48"')+R(1009,467,1079,585,'url(#br)')+R(992,572,1026,585,'url(#gy)')
+'<path d="M1021 327h5l-4 115h-6z" fill="#b4637a" stroke="#6b3848"/>'+R(1002,378,1037,391,'#e23fe2','stroke="#7c1c7c"')+R(1007,370,1012,378,'#2fae4c')+R(1030,370,1035,378,'#2fae4c')
+'<path d="M1008 327h13l5 40 9 75h-12l-7-60z" fill="#055b10" stroke="#033808"/>'+R(1037,327,1047,442,'#04520c','stroke="#022f06"')+'<circle cx="1021" cy="354" r="5.500" fill="#f07f9c" stroke="#b54a68"/><circle cx="1021" cy="354" r="2" fill="#fcd"/>'
+[1009,1028,1055].map(x=>R(x,429,x+7,442,'#2fbf50','stroke="#1b7a30"')).join('')+R(1002,442,1016,467,'#3c3430',K)+R(1016,442,1021,467,'#5f6e4e')+R(1021,442,1046,467,'#8cb878',K)+R(1046,442,1068,467,'#8580ae',K)+'<path d="M1033 442v25M1059 442v25" stroke="#444"/>'
+R(956,245,996,277,'#d2db2b',K)+'<circle cx="965" cy="256" r="5" fill="#2fae4c" stroke="#174e20"/>'+R(962,231,971,246,'#333')+R(973,240,980,256,'#333')
+R(1076,245,1084,260,'#dbe52a',K)
+'<path d="M1040 203q12-3 20 2l6 22-4 15-20 8z" fill="#d7efe5" stroke="#444"/><path d="M1062 212l17-9q12 12 12 30-4 18-18 22l-24 0 16-22z" fill="#e4f3ee" stroke="#333"/><path d="M1066 214h21M1066 224h25M1075 233v22" stroke="#555" fill="none"/>'
+'<path d="M892 140l35 44q30 39 63 62l40 9h36l9-21-35 6V212l-12-72z" fill="#dcf2e9" stroke="#333"/><path d="M903 140q20 30 47 58t75 48" fill="none" stroke="#2c3430" stroke-width="4"/><path d="M1025 246q-24-10-32-12l60 10q16-2 22-10l-25 20h-35" fill="#eaf6f1" stroke="#333"/><path d="M981 143q26 25 48 4M1007 140v16M1020 236l8-14" fill="none" stroke="#333"/>'
+R(1033,211,1040,225,'#fff','stroke="#222" stroke-width="2"')+R(1031,219,1043,228,'#555a78','stroke="#222" stroke-width="1.500"')+R(1033,231,1042,240,'#fff',K)
+R(990,254,1066,259,'#9fb0a8',K)+R(968,257,981,300,'#353535')+R(981,259,986,312,'#ee3a12',K)+R(1073,259,1094,327,'#c6cf25',K)+R(986,259,1073,327,'#dbe52a','stroke="#4e521a" stroke-width="2"')
+[[1082,269],[1082,317]].map(([x,y])=>`<circle cx="${x}" cy="${y}" r="7.500" fill="#35b94a" stroke="#174e20" stroke-width="1.500"/><circle cx="${x}" cy="${y}" r="4.500" fill="none" stroke="#174e20"/>`).join('')+R(1078,283,1094,294,'#e8330c')+R(1074,279,1081,299,'#ff4214','stroke="#8c2208"')+'<circle cx="1028.500" cy="289" r="5.500" fill="#777" stroke="#222" stroke-width="1.500"/><path d="M1025 286l6 6M1032 286l-7 6" stroke="#ddd"/>'
+R(1108,180,1138,585,'url(#ye)')+R(1097,171,1227,180,'#0019ff','stroke="#12184a" stroke-width="2"')+R(1097,171,1110,180,'#0a1790')+R(1219,171,1227,180,'#0a1790')+[1106,1114,1207,1215].map(x=>R(x,181,x+4,191,'#f050e0','stroke="#a83098" stroke-width=".700"')).join('')
+'<circle cx="1295" cy="362" r="34" fill="#ffe200"/><circle cx="1295" cy="362" r="14" fill="none" stroke="#222" stroke-width="1.500" stroke-dasharray="14 8" stroke-dashoffset="-4"/><path d="M1278 360.500h16.500V344h2.500v16.500h17v2.500h-17v17h-2.500v-17H1278z" fill="#d8d8a0" stroke="#222"/>'
+R(560,480,583,552,'#ffe6f4','stroke="#876"')+R(554,482,561,550,'#2b7040','stroke="#173c20"')+'<path d="M553 497v46" stroke="#2b7040" stroke-width="3" stroke-dasharray="6 2"/><g fill="#ddd" stroke="#444"><path d="M544 478h36v4h-36zM544 552h36v4h-36zM561 512h13v11h-13z"/></g>'+R(583,476,600,559,'#6a48da',K)+'<path d="M598 506q-12 0-8 10 0 12 10 10" fill="none" stroke="#2b1f60"/>'+V(593,543,'405',7)+'<path d="M578 475v8M578 550v8M600 482h5M600 551h5" stroke="#1f5c30" stroke-width="4"/><path d="M602 555v43M602 615v53" stroke="#3a3a3a" stroke-width="2.500"/>'
+R(613,512,657,619,'#bfb56a',K)+R(613,619,657,745,'#4bafff',K)+R(657,512,659,745,'#a5622a')+[542,602,637,728].map(y=>bolt(648.5,y,6.5)).join('')+V(632,568,'551',12)+V(632,695,'552',12)
+sensor(472)+sensor(679)
+[795,842,895,946,990,1040,1105].map((x,i)=>R(x,741,x+24,745,i%3?'#5e8fb4':'#5a4ba8')).join('')
+layer(699,704,736,742,'#fde6f2','#5d4c55')+layer(664,669,692,699,'#d8e4f7','#51525e')+layer(620,625,657,663,'#fde6f2','#5d4c55')+layer(585,590,613,620,'#d8e4f7','#51525e')
+hole(870,602,7)+T(885,607,'M16')+hole(870,641,7)+T(886,646,'M16')+T(1008,607,'M16')+hole(1043.5,602,7)+T(1008,646,'M16')+hole(1043.5,641.5,7)+hole(957,681,7)+T(972,685,'M16')+hole(957,719.5,7)+T(972,724,'M16')
+R(935,586,980,662,'#b8b8bc','stroke="#666"')+R(946,586,968,592,'#eee',K)+R(938,598,976,659,'#0c7d1c','stroke="#08450f"')+R(950,600,954,618,'#3aa347')+R(937,593,972,598,'#e23c14')+R(924,620,990,638,'#6c1a6c')+R(925,621,988,634,'#f53cf0')+bolt(934,628,5)+bolt(979.5,628,5)+dot(957,628,2.5)+T(960,631,'S41',7)
+`<path d="M507 745h925l7 7v40l-7 7H507l-7-7v-40z" fill="#fff" ${K}/>`+R(500,752,545,792,'#c5c5c5')+R(661,746,692,798,'url(#f1)')+R(692,752,736,792,'#c5c5c5')+R(1204,752,1247,792,'#f4f4f4')+R(1247,746,1278,792,'url(#f2)')+R(1395,752,1439,792,'#f4f4f4')
+'<path d="M500 792h939l-6 7H506z" fill="#6b6b6b"/><path d="M500 752h45M692 752h44l468 0M1204 752h43M1278 752h161" stroke="#777" fill="none"/><path d="M545 746v46M661 746v52M697 745l-5 8v40l5 6M736 746v46M1204 746v46M1242 745l5 8v40l-5 6M1278 746v52M1395 746v46" fill="none" stroke="#444"/>'
+R(509,799,1430,805,'#8f8f38')+R(552,801,1385,803,'#dcd86c')+'<path d="M509 805h921M552 800v5M664 800v5M701 800v5M1195 800v5M1239 800v5M1275 800v5M1385 800v5" stroke="#44441c" stroke-width="1.500"/>'
+hole(970,772,10)+T(993,778,'M24')+clamp(0,'562')+clamp(258,'563')
+R(1324,725,1337,730,'#1f8a38')+R(1337,722,1339,733,'#444')
+'<path d="M301 950v-24" stroke="#0a3cc8" stroke-width="3.500"/><path d="M301 914l4 14h-8z" fill="#0a3cc8"/>'+R(303,934,331,952,'#d8d8d8','stroke="#bbb"')+T(297,914,'Z',13,'style="fill:#7784b0;font-weight:400"');

define('model-view',`<style>:host{display:block;flex:1;min-width:0;min-height:0;overflow:hidden;background:#fff}svg{display:block;width:100%;height:100%}text{font-family:"Liberation Sans",sans-serif;font-weight:700;fill:#222}</style><svg role="img" aria-label="模型视图"><g transform="translate(-229 -144)">${scene}</g></svg>`);

define('nx-status',`<style>:host{display:flex;align-items:center;height:25px;flex:none;border-top:2px solid #ccc;box-sizing:border-box;padding:0 59px 3px 4px;font-weight:600;font-size:13px;line-height:18px;color:#222}span{flex:1}nx-icon+nx-icon{margin-left:5px}</style><span>选择对象并使用 MB3，或者双击某一对象</span><nx-icon name="flag" tiny></nx-icon><nx-icon name="win" tiny></nx-icon>`);

define('water-mark',`<style>:host{display:block;position:absolute;left:200px;bottom:51px;color:#f00;font:700 34px/42px "Lato","Noto Sans CJK SC",sans-serif;white-space:nowrap}p{margin:0}.a{font-size:36px}</style><p class="a">加入QQ交流群881349189</p><p>大量汽车模具设计图档资料免费下载</p>`);
define('tip-haze',`<style>:host{display:block;position:absolute;left:812px;bottom:38px;width:490px}
.h{height:84px;background:radial-gradient(90px 74px at 17% 105%,#ea8f82,transparent),radial-gradient(110px 80px at 42% 110%,#eaa697,transparent),radial-gradient(110px 96px at 60% 100%,#ebb0a2,transparent),radial-gradient(90px 80px at 87% 100%,#ee988b,transparent),linear-gradient(transparent 8%,#f5d8cc 55%,#efb9aa);-webkit-mask-image:linear-gradient(90deg,transparent 1%,#000 12%,#000 93%,transparent);mask-image:linear-gradient(90deg,transparent 1%,#000 12%,#000 93%,transparent)}
.s{height:7px;margin:0 5px 0 11px;background:#fcfbe8;border:1px solid #555;border-width:0 1px 2px;box-sizing:border-box}</style><div class="h"></div><div class="s"></div>`);

define('nx-app',`<style>:host{display:flex;height:100vh;margin:0 29px 0 28px}
.strip{width:3px;flex:none;background:linear-gradient(#e8401e 0 24px,transparent 24px calc(100% - 22px),#f04020 0),linear-gradient(90deg,#1b2f9a 60%,#c88078 0)}
.win{flex:1;min-width:0;display:flex;flex-direction:column;background:#fff}
.in{flex:1;min-height:0;display:flex;flex-direction:column;padding-left:4px;margin-left:1px;border-left:1px solid #ddd}
.in2{flex:1;min-height:0;display:flex;flex-direction:column;border-left:2px solid #c8c8c8;padding-left:3px}
.main{flex:1;min-height:0;display:flex}
.t{height:8px;flex:none;background:#5b7f84;border-bottom:1px solid #9bc0e8;border-top:1px solid #b5c5c5;box-sizing:border-box;margin-left:4px}.blue{height:8px;flex:none;background:radial-gradient(60px 20px at 53% 0,#1c6cff,transparent),#0042cc}
.edge{position:absolute;right:29px;top:0;bottom:0;width:5px;background:linear-gradient(#e8401e 0 24px,transparent 24px calc(100% - 23px),#f04020 0),linear-gradient(90deg,#e0a8a0 1px,transparent 1px);pointer-events:none}</style>
<div class="strip"></div><div class="win"><div class="in"><div class="in2"><nx-titlebar></nx-titlebar><nx-menubar></nx-menubar><nx-main-toolbar></nx-main-toolbar><nx-select-toolbar></nx-select-toolbar>
<div class="main"><nx-resource-bar></nx-resource-bar><part-navigator></part-navigator><model-view></model-view></div><nx-status></nx-status></div></div><div class="t"></div><div class="blue"></div></div>
<div class="edge"></div><water-mark></water-mark><tip-haze></tip-haze>`);
</script>
</body>
</html>
